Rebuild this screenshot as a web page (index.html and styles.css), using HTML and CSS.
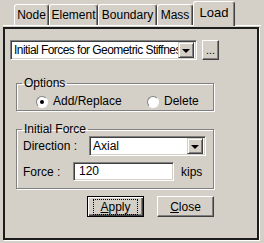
FILE: index.html
```html
<!DOCTYPE html>
<html lang="en">

<head>
  <meta charset="UTF-8" />
  <title>Load</title>
  <link rel="stylesheet" href="styles.css">
</head>

<body>
  <div class="tabs">
    <div class="tab tab-node">Node</div>
    <div class="tab tab-element">Element</div>
    <div class="tab tab-boundary">Boundary</div>
    <div class="tab tab-mass">Mass</div>
    <div class="tab tab-load active">Load</div>
  </div>

  <div class="panel">
    <div class="frame">
      <div class="load-row">
        <div class="field combo combo-load">
          <span class="combo-text">Initial Forces for Geometric Stiffnes</span>
          <span class="drop"><span class="arrow"></span></span>
        </div>
        <div class="btn btn-more">...</div>
      </div>

      <fieldset class="group group-options">
        <legend>Options</legend>
        <div class="radio-row">
          <label class="radio-item radio-add"><span class="radio checked"></span>Add/Replace</label>
          <label class="radio-item"><span class="radio"></span>Delete</label>
        </div>
      </fieldset>

      <fieldset class="group group-force">
        <legend>Initial Force</legend>
        <div class="form-row row-direction">
          <span class="lbl lbl-direction">Direction :</span>
          <div class="field combo combo-direction">
            <span class="combo-text">Axial</span>
            <span class="drop"><span class="arrow"></span></span>
          </div>
        </div>
        <div class="form-row row-force">
          <span class="lbl lbl-force">Force :</span>
          <div class="field input-force">120</div>
          <span class="unit">kips</span>
        </div>
      </fieldset>

      <div class="actions">
        <div class="btn btn-default"><span class="focus"><u>A</u>pply</span></div>
        <div class="btn btn-close"><u>C</u>lose</div>
      </div>
    </div>
  </div>
</body>

</html>
```

FILE: styles.css
```css
:root {
  --face: #d4d0c8;
  --shadow: #808080;
  --dark: #404040;
  --light: #ffffff;
}

* {
  box-sizing: border-box;
}

body {
  margin: 0;
  width: 264px;
  height: 243px;
  overflow: hidden;
  background: var(--face);
  font-family: "Liberation Sans", Arial, sans-serif;
  font-size: 12px;
  color: #000;
}

/* tab strip */
.tabs {
  display: flex;
  align-items: flex-end;
  height: 25px;
  padding-left: 14px;
}

.tab {
  height: 21px;
  line-height: 21px;
  text-align: center;
  border: 1px solid;
  border-color: var(--light) var(--dark) transparent var(--light);
  border-bottom: none;
  border-radius: 3px 3px 0 0;
  box-shadow: inset -1px 0 var(--shadow);
  white-space: nowrap;
}

.tab-node { width: 35px; }
.tab-element { width: 49px; }
.tab-boundary { width: 59px; }
.tab-mass { width: 36px; }

.tab-load {
  width: 42px;
  height: 25px;
  margin-bottom: -1px;
  line-height: 22px;
  font-size: 13px;
  position: relative;
  z-index: 1;
  background: var(--face);
}

/* page area */
.panel {
  margin-left: 3px;
  width: 258px;
  height: 218px;
  border-top: 1px solid var(--light);
  padding-top: 1px;
}

.frame {
  width: 256px;
  height: 213px;
  border: 2px solid #1c1c1c;
  box-shadow: 1px 1px 0 var(--light);
}

/* sunken fields */
.field {
  background: #fff;
  border: 1px solid;
  border-color: var(--shadow) var(--light) var(--light) var(--shadow);
  box-shadow: inset 1px 1px var(--dark), inset -1px -1px var(--face);
}

.combo {
  display: flex;
  align-items: center;
  overflow: hidden;
  padding: 2px;
}

.combo-text {
  flex: 1;
  min-width: 0;
  padding-left: 1px;
  white-space: nowrap;
  overflow: hidden;
}

.combo-load .combo-text {
  letter-spacing: -0.55px;
}

.drop {
  flex: none;
  width: 16px;
  height: 16px;
  display: flex;
  align-items: center;
  justify-content: center;
  background: var(--face);
  border: 1px solid;
  border-color: var(--face) var(--dark) var(--dark) var(--face);
  box-shadow: inset 1px 1px var(--light), inset -1px -1px var(--shadow);
}

.arrow {
  width: 0;
  height: 0;
  border-left: 4px solid transparent;
  border-right: 4px solid transparent;
  border-top: 4px solid #000;
  margin-top: 1px;
}

.load-row {
  display: flex;
  margin-top: 11px;
  padding-left: 5px;
}

.combo-load {
  width: 187px;
  height: 20px;
}

/* raised buttons */
.btn {
  display: flex;
  align-items: center;
  justify-content: center;
  background: var(--face);
  border: 1px solid;
  border-color: var(--light) var(--dark) var(--dark) var(--light);
  box-shadow: inset -1px -1px var(--shadow), inset 1px 1px var(--face);
}

.btn-more {
  margin-left: 5px;
  width: 17px;
  height: 20px;
  padding-bottom: 3px;
  align-items: flex-end;
  font-size: 11px;
}

/* group boxes */
.group {
  margin: 0 0 0 11px;
  width: 198px;
  border: 1px solid var(--shadow);
  box-shadow: inset 1px 1px var(--light), 1px 1px 0 var(--light);
  padding: 0 6px;
}

.group legend {
  padding: 0 2px;
  margin-left: -1px;
  line-height: 13px;
}

.group-options {
  margin-top: 17px;
  height: 34px;
  padding-top: 5px;
}

.radio-row {
  display: flex;
  padding-left: 13px;
}

.radio-item {
  display: flex;
  align-items: center;
  line-height: 13px;
}

.radio-add {
  width: 111px;
}

.radio {
  width: 12px;
  height: 12px;
  margin-right: 5px;
  border-radius: 50%;
  background: #fff;
  border: 1px solid;
  border-color: var(--shadow) var(--light) var(--light) var(--shadow);
  display: flex;
  align-items: center;
  justify-content: center;
}

.radio.checked::after {
  content: "";
  width: 4px;
  height: 4px;
  border-radius: 50%;
  background: #000;
}

.group-force {
  margin-top: 12px;
  height: 66px;
}

.form-row {
  display: flex;
  align-items: center;
}

.lbl-direction {
  width: 66px;
}

.combo-direction {
  width: 117px;
  height: 20px;
}

.row-force {
  margin-top: 6px;
}

.lbl-force {
  width: 50px;
}

.input-force {
  width: 101px;
  height: 19px;
  padding-left: 5px;
  line-height: 17px;
}

.unit {
  margin-left: 7px;
}

.actions {
  display: flex;
  margin-top: 7px;
  padding-left: 82px;
  gap: 13px;
}

.actions .btn {
  width: 57px;
  height: 21px;
}

.btn-default {
  border: 1px solid #000;
  box-shadow: inset 1px 1px var(--light), inset -1px -1px var(--dark), inset -2px -2px var(--shadow);
}

.focus {
  border: 1px dotted #000;
  padding: 1px 6px;
  line-height: 12px;
}
```
